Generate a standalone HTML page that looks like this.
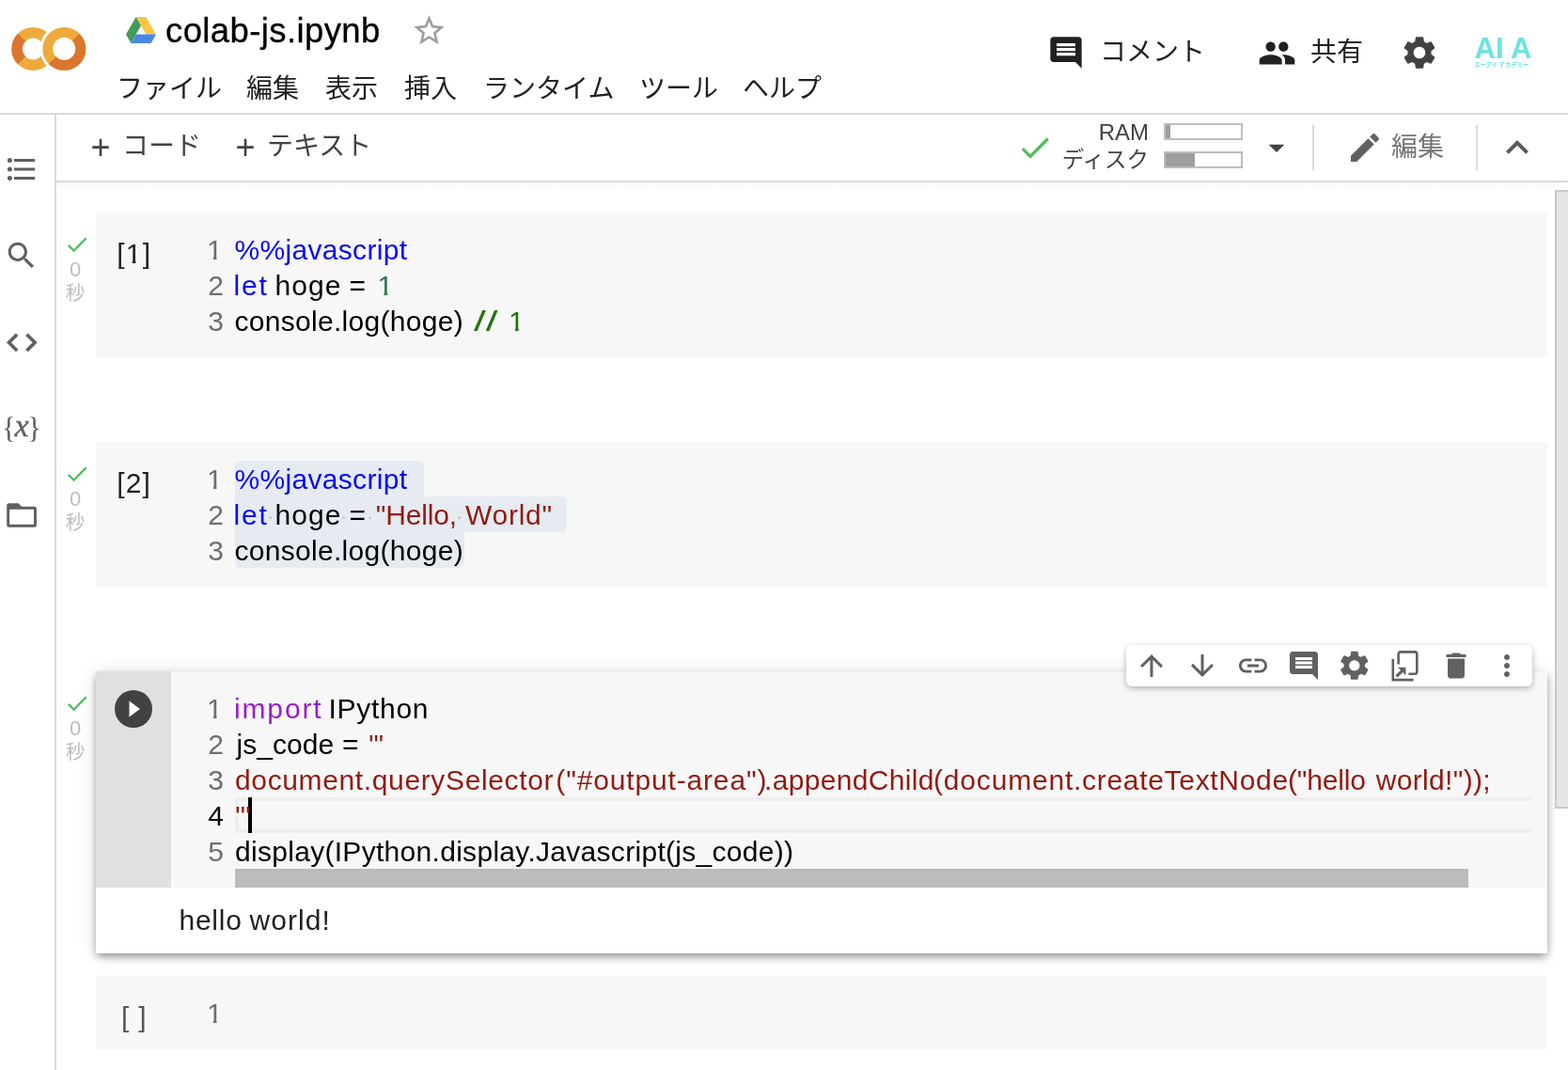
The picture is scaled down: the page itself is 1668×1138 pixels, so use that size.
<!DOCTYPE html>
<html lang="ja">
<head>
<meta charset="utf-8">
<title>colab-js.ipynb - Colaboratory</title>
<style>
*{box-sizing:border-box;margin:0;padding:0}
html,body{width:1668px;height:1138px;overflow:hidden;background:#fff}
body{position:relative;will-change:transform;font-family:"Liberation Sans","Noto Sans CJK JP",sans-serif;color:#212121}
.abs{position:absolute}
.t{position:absolute;white-space:pre;line-height:1}
svg{position:absolute;display:block;overflow:visible}
/* header */
#hdr-line{left:0;top:120px;width:1668px;height:2px;background:#dadada}
#title{left:176px;top:15px;font-size:36.5px;letter-spacing:.4px;color:#000;-webkit-text-stroke:.3px #000}
.menu{top:81px;font-size:28px;color:#212121}
.hbtn{top:42px;font-size:28px;color:#212121}
/* toolbar */
#tb-line{left:60px;top:192px;width:1608px;height:2px;background:#dadada}
#tb-shadow{left:60px;top:194px;width:1608px;height:7px;background:linear-gradient(#f5f5f5,#fff)}
.tbtn{top:142px;font-size:28px;color:#424242}
.res{font-size:24px;color:#424242}
.bar{height:18px;width:84px;border:2px solid #bdbdbd;background:#fff}
.bar i{display:block;height:100%;background:#9e9e9e}
.vsep{width:2px;top:133px;height:48px;background:#dadada}
/* sidebar */
#side-line{left:58px;top:122px;width:2px;height:1016px;background:#dadada}
.sx{font-family:"Liberation Serif",serif;color:#5f5f5f}
/* cells */
.cell{left:102px;width:1544px;background:#f7f7f7}
.code{font-size:30px;color:#000;line-height:38px}
.ln{font-size:30px;color:#6e6e6e;text-align:right;width:40px;left:198px;line-height:38px}
.exec{font-size:30px;color:#212121;line-height:38px}
.sec{font-size:20.500px;color:#bdbdbd;text-align:center;width:30px;left:65px}
.sel{background:#e5ebf1}
.dot{width:3px;height:3px;border-radius:1.5px;background:#c3c7cc;margin:-.5px 0 0 -.5px}
#vtrack{left:1654px;top:194px;width:14px;height:944px;background:#fff}
#vscroll{left:1654px;top:202px;width:14px;height:658px;background:#e5e5e5;border:2px solid #c9c9c9;border-right:none}
#focus{background:#fff;box-shadow:0 4px 8px 0 rgba(0,0,0,.14),0 2px 20px 0 rgba(0,0,0,.12),0 4px 8px -2px rgba(0,0,0,.3)}
#ctb{left:1198px;top:686px;width:432px;height:44px;background:#fff;border-radius:6px;box-shadow:0 2px 6px 0 rgba(0,0,0,.3)}
.ln.act{color:#0b0b0b}.out{color:#212121}
.one{display:inline-block;clip-path:polygon(0 0,100% 0,100% 26px,10.6px 26px,10.6px 100%,7px 100%,7px 26px,0 26px)}
.kw{color:#0606f6}.num{color:#2a7a4e}.cm{color:#26720e}.str{color:#8f1b11}.imp{color:#9a1ccf}
</style>
</head>
<body>
<!-- ================= HEADER ================= -->
<div id="header">
<svg style="left:0;top:0" width="110" height="100" viewBox="0 0 110 100">
  <circle cx="35.2" cy="52" r="17.15" fill="none" stroke="#eeab3b" stroke-width="11.5"/>
  <circle cx="35.2" cy="52" r="17.15" fill="none" stroke="#da762d" stroke-width="11.5" stroke-dasharray="26.94 200" transform="rotate(135 35.2 52)"/>
  <circle cx="68.3" cy="51.9" r="26" fill="#fff"/>
  <circle cx="68.3" cy="51.9" r="17.5" fill="none" stroke="#eeab3b" stroke-width="10.9"/>
  <circle cx="68.3" cy="51.9" r="17.5" fill="none" stroke="#da762d" stroke-width="10.9" stroke-dasharray="54.98 200" transform="rotate(-45 68.3 51.9)"/>
</svg>
<svg style="left:134px;top:18px" width="32" height="28" viewBox="0 0 32 28">
  <polygon points="10.7,0 21.3,0 32,18.5 21.3,18.5" fill="#f6c744"/>
  <polygon points="10.7,0 0,18.5 5.3,28 16,9.2" fill="#439a5c"/>
  <polygon points="10.7,18.5 32,18.5 26.7,28 5.3,28" fill="#4a86e8"/>
  <polygon points="10.7,18.5 5.3,28 8,23.200" fill="#3b6fcf"/>
</svg>
<div class="t" id="title">colab-js.ipynb</div>
<svg style="left:436.75px;top:13px" width="39" height="39" viewBox="0 0 24 24"><path fill="#9e9e9e" d="M22 9.24l-7.19-.62L12 2 9.19 8.63 2 9.24l5.46 4.73L5.82 21 12 17.27 18.18 21l-1.63-7.03L22 9.24zM12 15.4l-3.76 2.27 1-4.28-3.32-2.88 4.38-.38L12 6.1l1.71 4.04 4.38.38-3.32 2.88 1 4.28L12 15.4z"/></svg>
<div class="t menu" style="left:124px">ファイル</div>
<div class="t menu" style="left:262px">編集</div>
<div class="t menu" style="left:346px">表示</div>
<div class="t menu" style="left:430px">挿入</div>
<div class="t menu" style="left:514px">ランタイム</div>
<div class="t menu" style="left:680px">ツール</div>
<div class="t menu" style="left:790px">ヘルプ</div>

<svg style="left:1114px;top:36px" width="40" height="40" viewBox="0 0 24 24"><path fill="#212121" d="M21.99 4c0-1.1-.89-2-1.99-2H4c-1.1 0-2 .9-2 2v12c0 1.1.9 2 2 2h14l4 4-.01-18zM18 14H6v-2h12v2zm0-3H6V9h12v2zm0-3H6V6h12v2z"/></svg>
<div class="t hbtn" style="left:1170px">コメント</div>
<svg style="left:1337.5px;top:36px" width="41" height="41" viewBox="0 0 24 24"><path fill="#212121" d="M16 11c1.66 0 2.99-1.34 2.99-3S17.66 5 16 5c-1.66 0-3 1.34-3 3s1.34 3 3 3zm-8 0c1.66 0 2.99-1.34 2.99-3S9.66 5 8 5C6.34 5 5 6.34 5 8s1.34 3 3 3zm0 2c-2.33 0-7 1.17-7 3.5V19h14v-2.5c0-2.33-4.670-3.500-7-3.500zm8 0c-.29 0-.62.02-.97.05 1.16.84 1.97 1.97 1.970 3.450V19h6v-2.500c0-2.330-4.670-3.500-7-3.500z"/></svg>
<div class="t hbtn" style="left:1394px">共有</div>
<svg style="left:1489px;top:35px" width="42" height="42" viewBox="0 0 24 24"><path fill="#424242" d="M19.14 12.94c.04-.3.06-.61.06-.94 0-.32-.02-.64-.07-.94l2.03-1.58c.18-.14.23-.41.12-.61l-1.92-3.32c-.12-.22-.37-.29-.59-.22l-2.39.96c-.5-.38-1.03-.7-1.62-.94l-.36-2.54c-.04-.24-.24-.41-.48-.41h-3.84c-.24 0-.43.17-.47.41l-.36 2.54c-.59.24-1.13.57-1.62.94l-2.39-.96c-.22-.08-.47 0-.59.22L2.74 8.87c-.12.21-.08.47.12.61l2.03 1.58c-.05.3-.09.63-.09.94s.02.64.07.94l-2.03 1.58c-.18.14-.23.41-.12.61l1.92 3.32c.12.22.37.29.59.22l2.39-.96c.5.38 1.03.7 1.62.94l.36 2.54c.05.24.24.41.48.41h3.84c.24 0 .44-.17.47-.41l.36-2.54c.59-.24 1.13-.56 1.62-.94l2.39.96c.22.08.47 0 .59-.22l1.92-3.32c.12-.22.07-.47-.12-.61l-2.01-1.58zM12 15.6c-1.98 0-3.6-1.62-3.6-3.6s1.620-3.600 3.600-3.600 3.600 1.620 3.600 3.600-1.620 3.600-3.600 3.600z"/></svg>
<div class="t" style="left:1568.5px;top:36px;font-size:31px;font-weight:bold;color:#6de3e0;width:60.300px;overflow:hidden">AI A</div>
<div class="t" style="left:1568.5px;top:66px;font-size:6.3px;color:#6de3e0;font-weight:bold">エーアイ アカデミー</div>
<div class="abs" id="hdr-line"></div>
</div>
<!-- ================= SIDEBAR ================= -->
<div id="sidebar">
<div class="abs" id="side-line"></div>
<svg style="left:0;top:160px" width="48" height="40" viewBox="0 0 48 40"><g fill="#5f5f5f"><circle cx="10.4" cy="10.500" r="2.500"/><circle cx="10.4" cy="20" r="2.500"/><circle cx="10.4" cy="29.500" r="2.500"/><rect x="15" y="9" width="22.200" height="3"/><rect x="15" y="18.500" width="22.200" height="3"/><rect x="15" y="28" width="22.200" height="3"/></g></svg>
<svg style="left:4.25px;top:253.250px" width="37.500" height="37.500" viewBox="0 0 24 24"><path fill="#616161" d="M15.5 14h-.79l-.28-.27C15.41 12.59 16 11.11 16 9.5 16 5.91 13.09 3 9.5 3S3 5.91 3 9.5 5.91 16 9.5 16c1.61 0 3.09-.59 4.23-1.57l.27.28v.79l5 4.99L20.49 19l-4.99-5zm-6 0C7.01 14 5 11.99 5 9.5S7.01 5 9.500 5 14 7.010 14 9.500 11.990 14 9.500 14z"/></svg>
<svg style="left:3.700px;top:344.700px" width="38.600" height="38.600" viewBox="0 0 24 24"><path fill="#616161" stroke="#616161" stroke-width=".4" d="M9.4 16.6L4.8 12l4.6-4.6L8 6l-6 6 6 6 1.4-1.4zm5.2 0l4.6-4.6-4.6-4.6L16 6l6 6-6 6-1.4-1.400z"/></svg>
<div class="t sx" id="sx1" style="left:2px;top:440px;font-size:31px">{</div><div class="t sx" id="sx2" style="left:15.400px;top:435.500px;font-size:34px;font-style:italic;-webkit-text-stroke:.4px #5f5f5f">x</div><div class="t sx" id="sx3" style="left:29px;top:440px;font-size:31px">}</div>
<svg style="left:0;top:520px" width="48" height="48" viewBox="0 0 48 48"><path fill="#5f5f5f" fill-rule="evenodd" d="M9.7 15.200H19.500L23.100 18.800H36.400a2.500 2.500 0 0 1 2.500 2.500V38.300a2.500 2.500 0 0 1-2.500 2.500H9.700a2.500 2.500 0 0 1-2.500-2.500V17.700a2.500 2.500 0 0 1 2.500-2.500zM10.100 21.700V37.800H36V21.700z"/></svg>
</div>
<!-- ================= TOOLBAR ================= -->
<div id="toolbar">
<div class="t tbtn" style="left:96.500px;top:139px;font-size:36px">+</div>
<div class="t tbtn" style="left:130px">コード</div>
<div class="t tbtn" style="left:250.500px;top:139px;font-size:36px">+</div>
<div class="t tbtn" style="left:284px">テキスト</div>
<svg style="left:1081px;top:137px" width="40" height="40" viewBox="0 0 24 24"><path fill="#4fbe5d" d="M9 16.2L4.8 12l-1.4 1.4L9 19 21 7l-1.4-1.4L9 16.2z"/></svg>
<div class="t res" style="left:1100px;width:122px;text-align:right;top:129px">RAM</div>
<div class="t res" style="left:1100px;width:122px;text-align:right;top:159px;font-size:23.500px">ディスク</div>
<div class="abs bar" style="left:1238px;top:131px"><i style="width:5px"></i></div>
<div class="abs bar" style="left:1238px;top:161px"><i style="width:31px"></i></div>
<svg style="left:1338px;top:136.500px" width="40" height="40" viewBox="0 0 24 24"><path fill="#424242" d="M7 10l5 5 5-5z"/></svg>
<div class="abs vsep" style="left:1396px"></div>
<svg style="left:1432.25px;top:137px" width="40" height="40" viewBox="0 0 24 24"><path fill="#616161" d="M3 17.25V21h3.75L17.81 9.94l-3.75-3.75L3 17.250zM20.710 7.040c.39-.39.39-1.020 0-1.410l-2.340-2.340c-.39-.39-1.020-.39-1.410 0l-1.830 1.830 3.750 3.750 1.830-1.830z"/></svg>
<div class="t tbtn" style="left:1480px;top:143px;color:#757575">編集</div>
<div class="abs vsep" style="left:1570px"></div>
<svg style="left:1590px;top:133px" width="48" height="48" viewBox="0 0 24 24"><path fill="#5a5a5a" d="M12 8l-6 6 1.41 1.41L12 10.83l4.59 4.58L18 14z"/></svg>
<div class="abs" id="tb-line"></div>
<div class="abs" id="tb-shadow"></div>
</div>
<!-- ================= CELLS ================= -->
<div id="cells">
<div class="abs cell" style="top:226px;height:154px"></div>
<svg style="left:68px;top:246px" width="28" height="28" viewBox="0 0 24 24"><path fill="#4fbe5d" d="M9 16.2L4.8 12l-1.4 1.4L9 19 21 7l-1.4-1.4L9 16.2z"/></svg>
<div class="t sec" style="top:275.5px;font-size:22px">0</div>
<div class="t sec" style="top:302px">秒</div>
<div class="t exec" style="left:124.2px;top:250.5px;letter-spacing:1.2px">[<span class="one">1</span>]</div>
<div class="t ln one" style="top:247px;left:219.9px;width:auto">1</div>
<div class="t ln" style="top:285px">2</div>
<div class="t ln" style="top:323px">3</div>
<div class="abs cell" style="top:470px;height:154px"></div>
<svg style="left:68px;top:490px" width="28" height="28" viewBox="0 0 24 24"><path fill="#4fbe5d" d="M9 16.2L4.8 12l-1.4 1.4L9 19 21 7l-1.4-1.4L9 16.2z"/></svg>
<div class="t sec" style="top:519.5px;font-size:22px">0</div>
<div class="t sec" style="top:546px">秒</div>
<div class="abs sel" style="left:250px;top:490px;width:201px;height:38px;border-radius:6px 6px 0 0"></div>
<div class="abs sel" style="left:250px;top:528px;width:353px;height:38px;border-radius:0 6px 6px 0"></div>
<div class="abs sel" style="left:250px;top:566px;width:244px;height:38px;border-radius:0 0 6px 6px"></div>
<div class="abs dot" style="left:286.5px;top:549.5px"></div>
<div class="abs dot" style="left:364.75px;top:549.5px"></div>
<div class="abs dot" style="left:392.25px;top:549.5px"></div>
<div class="abs dot" style="left:487.25px;top:549.5px"></div>
<div class="t exec" style="left:124.2px;top:494.5px;letter-spacing:1.2px">[2]</div>
<div class="t ln one" style="top:491px;left:219.9px;width:auto">1</div>
<div class="t ln" style="top:529px">2</div>
<div class="t ln" style="top:567px">3</div>
<div class="abs" id="focus" style="left:102px;top:714px;width:1544px;height:300px"></div>
<div class="abs" style="left:102px;top:714px;width:1544px;height:230px;background:#f7f7f7"></div>
<div class="abs" style="left:102px;top:714px;width:80px;height:230px;background:#e0e0e0"></div>
<svg style="left:68px;top:734px" width="28" height="28" viewBox="0 0 24 24"><path fill="#4fbe5d" d="M9 16.2L4.8 12l-1.4 1.4L9 19 21 7l-1.4-1.4L9 16.2z"/></svg>
<div class="t sec" style="top:763.5px;font-size:22px">0</div>
<div class="t sec" style="top:790px">秒</div>
<svg style="left:122px;top:734px" width="40" height="40" viewBox="0 0 40 40"><circle cx="20" cy="20" r="20" fill="#424242"/><path d="M15.5 11.5v17l11.5-8.500z" fill="#fff"/></svg>
<div class="abs" style="left:250px;top:848px;width:1380px;height:38px;border:4px solid #eeeeee;border-right:none"></div>
<div class="abs" style="left:264px;top:848px;width:4px;height:38px;background:#000"></div>
<div class="abs" style="left:250px;top:924px;width:1312px;height:20px;background:#bcbcbc"></div>
<div class="t ln one" style="top:735px;left:219.9px;width:auto">1</div>
<div class="t ln" style="top:773px">2</div>
<div class="t ln" style="top:811px">3</div>
<div class="t ln act" style="top:849px">4</div>
<div class="t ln" style="top:887px">5</div>
<div class="abs" id="ctb"></div>
<svg style="left:1207.0px;top:689.5px" width="36" height="36" viewBox="0 0 24 24" fill="#616161"><path d="M4 12l1.41 1.41L11 7.83V20h2V7.83l5.58 5.59L20 12l-8-8-8 8z"/></svg>
<svg style="left:1261.0px;top:689.5px" width="36" height="36" viewBox="0 0 24 24" fill="#616161"><path d="M20 12l-1.41-1.41L13 16.17V4h-2v12.17l-5.58-5.59L4 12l8 8 8-8z"/></svg>
<svg style="left:1315.0px;top:689.5px" width="36" height="36" viewBox="0 0 24 24" fill="#616161"><path d="M3.9 12c0-1.71 1.39-3.1 3.1-3.1h4V7H7c-2.76 0-5 2.24-5 5s2.24 5 5 5h4v-1.9H7c-1.71 0-3.1-1.39-3.1-3.1zM8 13h8v-2H8v2zm9-6h-4v1.9h4c1.71 0 3.1 1.39 3.1 3.1s-1.39 3.1-3.1 3.1h-4V17h4c2.76 0 5-2.24 5-5s-2.24-5-5-5z"/></svg>
<svg style="left:1369.0px;top:689.5px" width="36" height="36" viewBox="0 0 24 24" fill="#616161"><path d="M21.99 4c0-1.1-.89-2-1.99-2H4c-1.1 0-2 .9-2 2v12c0 1.1.9 2 2 2h14l4 4-.01-18zM18 14H6v-2h12v2zm0-3H6V9h12v2zm0-3H6V6h12v2z"/></svg>
<svg style="left:1422.2px;top:688.7px" width="37.6" height="37.6" viewBox="0 0 24 24" fill="#616161"><path d="M19.14 12.94c.04-.3.06-.61.06-.94 0-.32-.02-.64-.07-.94l2.03-1.58c.18-.14.23-.41.12-.61l-1.92-3.32c-.12-.22-.37-.29-.59-.22l-2.39.96c-.5-.38-1.03-.7-1.62-.94l-.36-2.54c-.04-.24-.24-.41-.48-.41h-3.84c-.24 0-.43.17-.47.41l-.36 2.54c-.59.24-1.13.57-1.62.94l-2.39-.96c-.22-.08-.47 0-.59.22L2.74 8.87c-.12.21-.08.47.12.61l2.03 1.58c-.05.3-.09.63-.09.94s.02.64.07.94l-2.03 1.58c-.18.14-.23.41-.12.61l1.92 3.32c.12.22.37.29.59.22l2.39-.96c.5.38 1.03.7 1.62.94l.36 2.54c.05.24.24.41.48.41h3.84c.24 0 .44-.17.47-.41l.36-2.54c.59-.24 1.13-.56 1.62-.94l2.39.96c.22.08.47 0 .59-.22l1.92-3.32c.12-.22.07-.47-.12-.61l-2.01-1.58zM12 15.6c-1.98 0-3.6-1.62-3.6-3.6s1.62-3.6 3.6-3.6 3.6 1.62 3.6 3.6-1.62 3.6-3.6 3.6z"/></svg>
<svg style="left:1477.0px;top:689.5px" width="36" height="36" viewBox="0 0 24 24" fill="#616161"><g fill="none" stroke="#616161" stroke-width="1.73"><path d="M7.07 11V3.770a1.500 1.500 0 0 1 1.500-1.500h10.130a1.500 1.500 0 0 1 1.500 1.500V16.300a1.500 1.500 0 0 1-1.500 1.500H14.300"/><path d="M3.200 7.100V22.100H17.700"/><path d="M5.700 19.600L10.600 14.700" stroke-width="2.100"/></g><path d="M6.700 13.200h5.600v5.600z"/></svg>
<svg style="left:1531.0px;top:689.5px" width="36" height="36" viewBox="0 0 24 24" fill="#616161"><path d="M6 19c0 1.1.9 2 2 2h8c1.1 0 2-.9 2-2V7H6v12zM19 4h-3.5l-1-1h-5l-1 1H5v2h14V4z"/></svg>
<svg style="left:1585.0px;top:689.5px" width="36" height="36" viewBox="0 0 24 24" fill="#616161"><path d="M12 8c1.1 0 2-.9 2-2s-.9-2-2-2-2 .9-2 2 .9 2 2 2zm0 2c-1.1 0-2 .9-2 2s.9 2 2 2 2-.9 2-2-.9-2-2-2zm0 6c-1.1 0-2 .9-2 2s.9 2 2 2 2-.9 2-2-.9-2-2-2z"/></svg>
<div class="abs" id="vtrack"></div>
<div class="abs" id="vscroll"></div>
<div class="abs cell" style="top:1038px;height:78px"></div>
<div class="t exec" style="left:129px;top:1062.5px;color:#555;letter-spacing:.75px">[ ]</div>
<div class="t ln one" style="top:1059px;left:219.9px;width:auto">1</div>
<div class="t code kw" style="left:249.50px;top:247px;letter-spacing:0.318px">%%javascript</div>
<div class="t code kw" style="left:248.50px;top:285px;letter-spacing:1.875px">let</div>
<div class="t code" style="left:292.50px;top:285px;letter-spacing:1.083px">hoge</div>
<div class="t code" style="left:371.50px;top:285px">=</div>
<div class="t code num one" style="left:401.50px;top:285px">1</div>
<div class="t code" style="left:249.50px;top:323px;letter-spacing:0.297px">console.log(hoge)</div>
<div class="t code cm" style="left:503.75px;top:323px;transform-origin:0 50%;transform:scaleX(1.544)">//</div>
<div class="t code cm one" style="left:541.00px;top:323px">1</div>
<div class="t code kw" style="left:249.50px;top:491px;letter-spacing:0.318px">%%javascript</div>
<div class="t code kw" style="left:248.50px;top:529px;letter-spacing:1.875px">let</div>
<div class="t code" style="left:292.50px;top:529px;letter-spacing:1.083px">hoge</div>
<div class="t code" style="left:371.50px;top:529px">=</div>
<div class="t code str" style="left:399.75px;top:529px;letter-spacing:-0.167px">"Hello,</div>
<div class="t code str" style="left:495.00px;top:529px;letter-spacing:0.750px">World"</div>
<div class="t code" style="left:249.50px;top:567px;letter-spacing:0.297px">console.log(hoge)</div>
<div class="t code imp" style="left:249.00px;top:735px;letter-spacing:1.850px">import</div>
<div class="t code" style="left:349.50px;top:735px;letter-spacing:0.708px">IPython</div>
<div class="t code" style="left:251.50px;top:773px;letter-spacing:0.042px">js_code</div>
<div class="t code" style="left:364.00px;top:773px">=</div>
<div class="t code str" style="left:392.00px;top:773px;letter-spacing:-0.500px">'''</div>
<div class="t code str" style="left:250.00px;top:811px;letter-spacing:0.633px">document.querySelector</div>
<div class="t code str" style="left:591.30px;top:811px;letter-spacing:0.847px">("#output-area")</div>
<div class="t code str" style="left:813.00px;top:811px;letter-spacing:0.336px">.appendChild</div>
<div class="t code str" style="left:993.00px;top:811px;letter-spacing:0.838px">(document</div>
<div class="t code str" style="left:1142.00px;top:811px;letter-spacing:0.693px">.createTextNode</div>
<div class="t code str" style="left:1370.00px;top:811px;letter-spacing:-0.167px">("hello</div>
<div class="t code str" style="left:1463.70px;top:811px;letter-spacing:0.333px">world!"));</div>
<div class="t code str" style="left:250.00px;top:849px;letter-spacing:-0.250px">'''</div>
<div class="t code" style="left:250.00px;top:887px;letter-spacing:0.295px">display(IPython.display.Javascript(js_code))</div>
<div class="t code out" style="left:190.50px;top:959.5px;letter-spacing:0.750px">hello</div>
<div class="t code out" style="left:265.50px;top:959.5px;letter-spacing:1.050px">world!</div>
</div>
</body>
</html>
